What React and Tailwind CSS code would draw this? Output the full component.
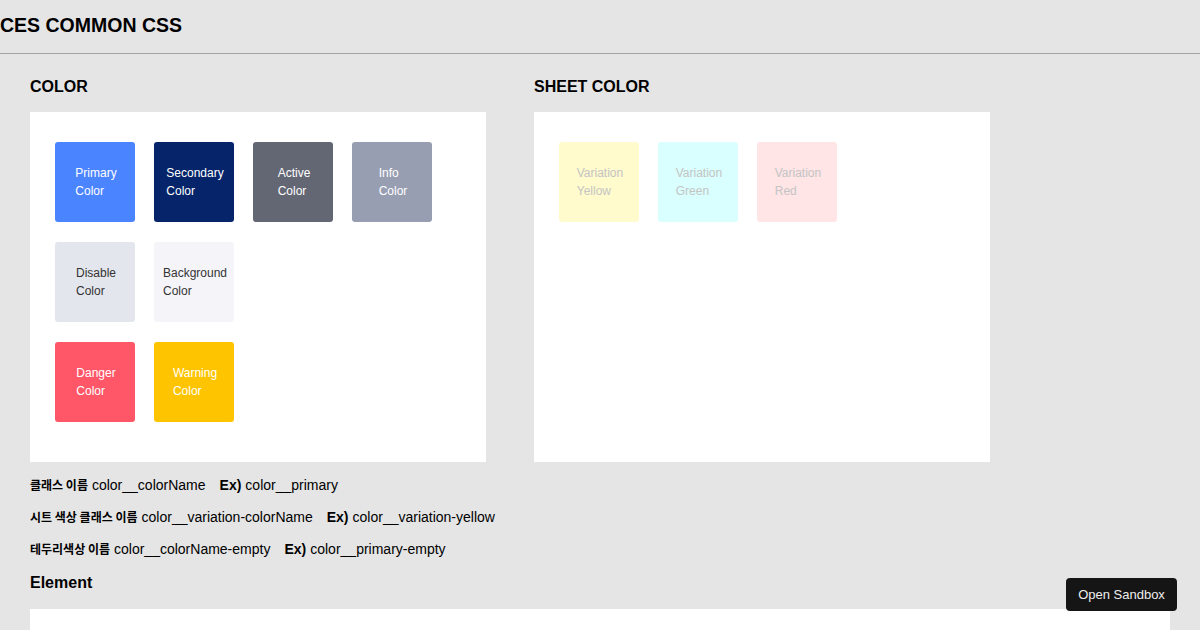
import React from "react";

const colors = [
  [
    { l1: "Primary", bg: "bg-[#4b84ff]", t: "text-white" },
    { l1: "Secondary", bg: "bg-[#05246a]", t: "text-white" },
    { l1: "Active", bg: "bg-[#636774]", t: "text-white" },
    { l1: "Info", bg: "bg-[#989eb2]", t: "text-white" },
  ],
  [
    { l1: "Disable", bg: "bg-[#e3e6ed]", t: "text-[#333333]" },
    { l1: "Background", bg: "bg-[#f4f4f9]", t: "text-[#333333]" },
  ],
  [
    { l1: "Danger", bg: "bg-[#ff5768]", t: "text-white" },
    { l1: "Warning", bg: "bg-[#ffc400]", t: "text-white" },
  ],
];

const sheet = [
  { l1: "Variation", l2: "Yellow", bg: "bg-[#fffbcc]" },
  { l1: "Variation", l2: "Green", bg: "bg-[#d9fffe]" },
  { l1: "Variation", l2: "Red", bg: "bg-[#ffe5e6]" },
];

function Swatch({ bg, t, l1, l2 = "Color" }) {
  return (
    <div className={`w-[80px] h-[80px] rounded-[3px] flex items-center justify-center ${bg} ${t}`}>
      <div className="text-[12px] leading-[18px] pl-[2px]">
        <div>{l1}</div>
        <div>{l2}</div>
      </div>
    </div>
  );
}

function Line({ ko, cls, ex }) {
  return (
    <div className="h-[32px] flex items-center text-[14px] text-black whitespace-nowrap">
      <span className="text-[12px] font-bold" style={{ fontFamily: '"Noto Sans CJK KR", sans-serif' }}>{ko}</span>
      <span className="ml-[4px]">{cls}</span>
      <span className="ml-[14px] font-bold">Ex)</span>
      <span className="ml-[4px]">{ex}</span>
    </div>
  );
}

export default function App() {
  return (
    <div
      className="w-[1200px] h-[630px] overflow-hidden bg-[#e5e5e5] relative"
      style={{ fontFamily: '"Liberation Sans", Arial, "Noto Sans CJK KR", sans-serif' }}
    >
      <div className="h-[54px] border-b border-[#a3a3a3] flex items-center">
        <h1 className="text-[19.5px] font-bold text-black leading-none pb-[1px]">CES COMMON CSS</h1>
      </div>
      <div className="px-[30px]">
        <div className="flex gap-[48px]">
          <div>
            <h2 className="h-[58px] pt-[7px] flex items-center text-[16px] font-bold text-black">COLOR</h2>
            <div className="w-[456px] h-[350px] bg-white pt-[30px] pl-[25px] flex flex-col gap-[20px]">
              {colors.map((row, i) => (
                <div key={i} className="flex gap-[19px]">
                  {row.map((c) => (
                    <Swatch key={c.l1} {...c} />
                  ))}
                </div>
              ))}
            </div>
          </div>
          <div>
            <h2 className="h-[58px] pt-[7px] flex items-center text-[16px] font-bold text-black">SHEET COLOR</h2>
            <div className="w-[456px] h-[350px] bg-white pt-[30px] pl-[25px]">
              <div className="flex gap-[19px]">
                {sheet.map((c) => (
                  <Swatch key={c.l2} {...c} t="text-[#c4c4c4]" />
                ))}
              </div>
            </div>
          </div>
        </div>
        <div className="pt-[7px]">
          <Line ko="클래스 이름" cls="color__colorName" ex="color__primary" />
          <Line ko="시트 색상 클래스 이름" cls="color__variation-colorName" ex="color__variation-yellow" />
          <Line ko="테두리색상 이름" cls="color__colorName-empty" ex="color__primary-empty" />
        </div>
        <h2 className="h-[44px] pb-[8px] flex items-center text-[16px] font-bold text-black">Element</h2>
        <div className="w-[1140px] h-[200px] bg-white"></div>
      </div>
      <button className="absolute left-[1066px] top-[578px] w-[111px] h-[33px] rounded-[4px] bg-[#151515] text-[#eeeeee] text-[13px] flex items-center justify-center">
        Open Sandbox
      </button>
    </div>
  );
}
